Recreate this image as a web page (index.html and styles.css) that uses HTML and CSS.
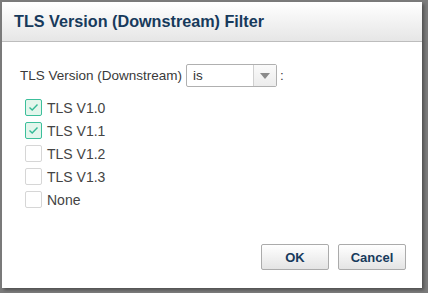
FILE: index.html
```html
<!DOCTYPE html>
<html>
<head>
<meta charset="utf-8">
<link rel="stylesheet" href="styles.css">
</head>
<body>
<div class="page">
  <div class="dialog">
    <div class="header">TLS Version (Downstream) Filter</div>
    <div class="content">
      <div class="cond">
        <span class="cond-label">TLS Version (Downstream)</span>
        <div class="select">
          <span class="select-value">is</span>
          <span class="select-arrow"><svg width="10" height="6" viewBox="0 0 10 6"><path d="M0 0 L10 0 L5 6 Z" fill="#8a8a8a"/></svg></span>
        </div>
        <span class="colon">:</span>
      </div>
      <ul class="options">
        <li class="opt"><span class="box checked"><svg width="11" height="9" viewBox="0 0 11 9"><path d="M1.5 4.5 L4.2 7 L9.5 1.5" fill="none" stroke="#33b996" stroke-width="1.4"/></svg></span><span class="opt-label">TLS V1.0</span></li>
        <li class="opt"><span class="box checked"><svg width="11" height="9" viewBox="0 0 11 9"><path d="M1.5 4.5 L4.2 7 L9.5 1.5" fill="none" stroke="#33b996" stroke-width="1.4"/></svg></span><span class="opt-label">TLS V1.1</span></li>
        <li class="opt"><span class="box"></span><span class="opt-label">TLS V1.2</span></li>
        <li class="opt"><span class="box"></span><span class="opt-label">TLS V1.3</span></li>
        <li class="opt"><span class="box"></span><span class="opt-label">None</span></li>
      </ul>
    </div>
    <div class="footer">
      <button class="btn">OK</button>
      <button class="btn">Cancel</button>
    </div>
  </div>
</div>
</body>
</html>
```
FILE: styles.css
```css
html, body {
  margin: 0;
  padding: 0;
}
body {
  background: #7b7b7b;
  width: 428px;
  height: 293px;
  overflow: hidden;
  font-family: "Liberation Sans", Arial, sans-serif;
}
.page {
  padding: 2px 0 0 2px;
}
.dialog {
  width: 420px;
  height: 286px;
  background: #ffffff;
  display: flex;
  flex-direction: column;
  box-shadow: 2px 2px 3px rgba(0,0,0,0.35);
}
.header {
  height: 40px;
  box-sizing: border-box;
  border-bottom: 1px solid #bdbdbd;
  background: linear-gradient(#ffffff, #e6e6e6);
  color: #173a5c;
  font-weight: bold;
  font-size: 16.2px;
  padding: 10px 0 0 12px;
}
.content {
  flex: 1;
  padding: 22px 0 0 18px;
}
.cond {
  display: flex;
  align-items: center;
  color: #3a3a3a;
  font-size: 13.5px;
}
.cond-label {
  margin-right: 4px;
}
.select {
  width: 91px;
  height: 23px;
  box-sizing: border-box;
  border: 1px solid #b0b0b0;
  border-radius: 2px;
  display: flex;
  align-items: center;
  background: #fff;
}
.select-value {
  flex: 1;
  padding-left: 6px;
  color: #333;
}
.select-arrow {
  width: 23px;
  height: 100%;
  box-sizing: border-box;
  border-left: 1px solid #d0d0d0;
  display: flex;
  align-items: center;
  justify-content: center;
  background: linear-gradient(#fafafa, #ececec);
}
.colon {
  margin-left: 3px;
}
.options {
  list-style: none;
  margin: 9px 0 0 5px;
  padding: 0;
}
.opt {
  display: flex;
  align-items: center;
  height: 23px;
  font-size: 14px;
  color: #444;
}
.box {
  width: 17px;
  height: 17px;
  box-sizing: border-box;
  border: 1px solid #d6d6d6;
  border-radius: 2px;
  background: #fff;
  margin-right: 5px;
  display: flex;
  align-items: center;
  justify-content: center;
}
.box.checked {
  border-color: #3cbf9b;
  background: #e3f6ec;
}
.footer {
  display: flex;
  justify-content: flex-end;
  gap: 9px;
  padding: 0 16px 18px 0;
}
.btn {
  width: 68px;
  height: 26px;
  border: 1px solid #ababab;
  border-radius: 2px;
  background: linear-gradient(#ffffff, #e4e4e4);
  color: #173a5c;
  font-family: "Liberation Sans", Arial, sans-serif;
  font-weight: bold;
  font-size: 13px;
  padding: 0;
}
```
